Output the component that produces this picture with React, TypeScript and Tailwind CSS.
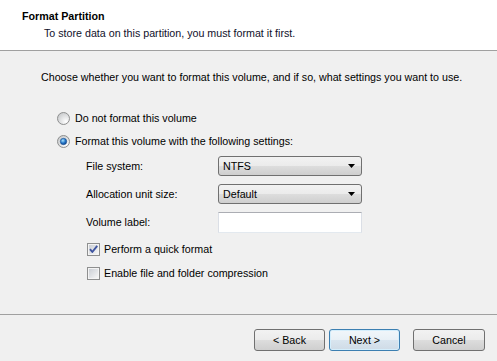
import { ReactNode } from 'react'

// Win7 styled radio
function Radio({ checked }: { checked?: boolean }) {
  return (
    <svg width="13" height="13" viewBox="0 0 13 13" className="shrink-0">
      <defs>
        <radialGradient id={checked ? 'rOn' : 'rOff'} cx="0.7" cy="0.75" r="0.8">
          <stop offset="0" stopColor="#ffffff" />
          <stop offset="1" stopColor="#c9cbcd" />
        </radialGradient>
        <radialGradient id="dot" cx="0.4" cy="0.35" r="0.7">
          <stop offset="0" stopColor="#a9e3fd" />
          <stop offset="0.55" stopColor="#2577c9" />
          <stop offset="1" stopColor="#0b3f86" />
        </radialGradient>
      </defs>
      <circle cx="6.5" cy="6.5" r="6" fill={`url(#${checked ? 'rOn' : 'rOff'})`} stroke="#8e8f8f" />
      {checked && <circle cx="6.5" cy="6.5" r="3.2" fill="url(#dot)" stroke="#1b4f90" strokeWidth="0.6" />}
    </svg>
  )
}

function Checkbox({ checked }: { checked?: boolean }) {
  return (
    <svg width="13" height="13" viewBox="0 0 13 13" className="shrink-0">
      <defs>
        <linearGradient id="cbFill" x1="0" y1="0" x2="1" y2="1">
          <stop offset="0" stopColor="#cbcfd5" />
          <stop offset="1" stopColor="#f6f6f6" />
        </linearGradient>
      </defs>
      <rect x="0.5" y="0.5" width="12" height="12" fill="#f4f4f4" stroke="#8e8f8f" />
      <rect x="2" y="2" width="9" height="9" fill="url(#cbFill)" />
      {checked && (
        <path d="M3 6.2 L5.3 9 L10.2 2.8" fill="none" stroke="#3f55a0" strokeWidth="1.9" strokeLinejoin="round" />
      )}
    </svg>
  )
}

function Combo({ value }: { value: string }) {
  return (
    <div className="w-[144px] h-[20px] flex items-center justify-between pl-[4px] pr-[6px] rounded-[3px] border border-[#707070] bg-[linear-gradient(to_bottom,#f2f2f2_0%,#ebebeb_50%,#dddddd_50%,#cfcfcf_100%)]">
      <span>{value}</span>
      <svg width="7" height="4" viewBox="0 0 7 4">
        <polygon points="0,0 7,0 3.5,4" fill="#000" />
      </svg>
    </div>
  )
}

function Button({ children, primary, wide }: { children: ReactNode; primary?: boolean; wide?: boolean }) {
  return (
    <button
      className={`${wide ? 'w-[72px]' : 'w-[71px]'} h-[22px] rounded-[3px] border flex items-center justify-center ${
        primary
          ? 'border-[#3c7fb1] shadow-[inset_0_0_0_1px_#d4eefc] bg-[linear-gradient(to_bottom,#f1f6fa_0%,#e8f0f6_50%,#d9e5ef_50%,#cfdbe6_100%)]'
          : 'border-[#707070] bg-[linear-gradient(to_bottom,#f2f2f2_0%,#ebebeb_50%,#dddddd_50%,#cfcfcf_100%)]'
      }`}
    >
      {children}
    </button>
  )
}

export default function App() {
  return (
    <div className="w-[497px] h-[361px] bg-[#f0f0f0] flex flex-col text-[10.7px] leading-[13px] text-black font-['Tahoma','Liberation_Sans',sans-serif] overflow-hidden">
      {/* header */}
      <div className="h-[51px] shrink-0 bg-white border-b border-[#a0a0a0] pt-[10px] pl-[22px]">
        <div className="font-bold">Format Partition</div>
        <div className="pl-[22px] mt-[4px] text-[#10102a]">To store data on this partition, you must format it first.</div>
      </div>

      {/* body */}
      <div className="flex-1 pt-[20px] pl-[41px]">
        <p>Choose whether you want to format this volume, and if so, what settings you want to use.</p>

        <div className="mt-[26px] pl-[16px] flex flex-col gap-[7px]">
          <label className="h-[16px] flex items-center gap-[5px]">
            <Radio />
            <span>Do not format this volume</span>
          </label>
          <label className="h-[16px] flex items-center gap-[5px]">
            <Radio checked />
            <span>Format this volume with the following settings:</span>
          </label>
        </div>

        <div className="mt-[7px] pl-[45px] flex flex-col">
          <div className="flex items-center">
            <span className="w-[132px]">File system:</span>
            <Combo value="NTFS" />
          </div>
          <div className="flex items-center mt-[8px]">
            <span className="w-[132px]">Allocation unit size:</span>
            <Combo value="Default" />
          </div>
          <div className="flex items-center mt-[8px]">
            <span className="w-[132px]">Volume label:</span>
            <div className="w-[144px] h-[21px] bg-white border border-[#dbdfe6] border-t-[#abadb3] border-b-[#e3e9ef]" />
          </div>

          <div className="mt-[8px] pl-[1px] flex flex-col gap-[8px]">
            <label className="h-[16px] flex items-center gap-[4px]">
              <Checkbox checked />
              <span>Perform a quick format</span>
            </label>
            <label className="h-[16px] flex items-center gap-[4px]">
              <Checkbox />
              <span>Enable file and folder compression</span>
            </label>
          </div>
        </div>
      </div>

      {/* footer */}
      <div className="h-[47px] shrink-0 border-t border-[#a0a0a0] pt-[14px] pr-[12px] flex justify-end items-start">
        <div className="flex">
          <Button>&lt; Back</Button>
          <div className="ml-[4px]">
            <Button primary>Next &gt;</Button>
          </div>
          <div className="ml-[13px]">
            <Button wide>Cancel</Button>
          </div>
        </div>
      </div>
    </div>
  )
}
